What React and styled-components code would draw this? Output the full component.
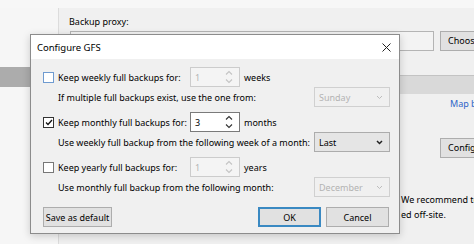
import { styled, createGlobalStyle } from "styled-components";

const GlobalStyle = createGlobalStyle`
  html, body {
    margin: 0;
    padding: 0;
    background: #f0f0f0;
  }
  body {
    font-family: "Noto Sans", "Open Sans", sans-serif;
    font-size: 9px;
    color: #000;
  }
`;

const Window = styled.div`
  position: relative;
  width: 474px;
  height: 244px;
  overflow: hidden;
  display: flex;
  flex-direction: column;
  background: #f0f0f0;
`;

const TopStrip = styled.div`
  height: 8px;
  background: #f7f7f7;
  flex-shrink: 0;
`;

const Main = styled.div`
  flex: 1;
  display: flex;
`;

const Sidebar = styled.div`
  width: 58px;
  flex-shrink: 0;
  background: #f6f6f6;
  border-right: 1px solid #dcdcdc;
  padding-top: 59px;
`;

const NavItem = styled.div`
  height: 20px;
  background: ${(p) => (p.$selected ? "#acacac" : "transparent")};
`;

const Content = styled.div`
  flex: 1;
  padding: 8px 0 0 11px;
  display: flex;
  flex-direction: column;
`;

const FieldLabel = styled.div`
  line-height: 12px;
  margin-left: -1px;
`;

const ProxyRow = styled.div`
  display: flex;
  gap: 6px;
  margin-top: 3px;
`;

const ProxyInput = styled.div`
  width: 362px;
  height: 18px;
  flex-shrink: 0;
  border: 1px solid #b4b4b4;
  background: #f3f3f3;
`;

const WinButton = styled.div`
  height: 18px;
  flex-shrink: 0;
  width: ${(p) => p.$width || 60}px;
  background: #e1e1e1;
  border: 1px solid #adadad;
  display: flex;
  align-items: center;
  justify-content: ${(p) => (p.$left ? "flex-start" : "center")};
  padding-left: ${(p) => (p.$left ? 7 : 0)}px;
  line-height: 12px;
  box-sizing: content-box;
`;

const HeaderBar = styled.div`
  margin-top: 24px;
  height: 18px;
  width: 420px;
  flex-shrink: 0;
  background: #d9d9d9;
  border-top: 1px solid #c3c3c3;
`;

const LinkText = styled.div`
  margin: 4px 0 0 380px;
  color: #2f66c8;
  white-space: nowrap;
  line-height: 12px;
`;

const ConfigureRow = styled.div`
  display: flex;
  margin: 28px 0 0 370px;
`;

const Note = styled.div`
  margin: 34px 0 0 331px;
  line-height: 15px;
  white-space: nowrap;
`;

/* dialog */

const Dialog = styled.div`
  position: absolute;
  left: 30px;
  top: 34px;
  width: 368px;
  height: 198px;
  border: 1px solid #8c8c8c;
  background: #f0f0f0;
  box-shadow: 0 2px 8px rgba(0, 0, 0, 0.18);
  display: flex;
  flex-direction: column;
`;

const TitleBar = styled.div`
  height: 24px;
  background: #fff;
  display: flex;
  align-items: center;
  justify-content: space-between;
  padding: 0 8px 0 6px;
  font-size: 9.5px;
`;

const CloseButton = styled.svg`
  width: 9px;
  height: 9px;
`;

const Body = styled.div`
  flex: 1;
  padding: 8px 9px 0 12px;
  display: flex;
  flex-direction: column;
`;

const Group = styled.div`
  margin-bottom: 5px;
`;

const MainRow = styled.div`
  height: 20px;
  display: flex;
  align-items: center;
`;

const SubRow = styled.div`
  height: 20px;
  display: flex;
  align-items: center;
  padding-left: 15px;
`;

const Check = styled.div`
  width: 9px;
  height: 9px;
  border: 1px solid ${(p) => p.$border};
  background: #fff;
  margin-right: 4px;
  display: flex;
  align-items: center;
  justify-content: center;
`;

const RowLabel = styled.div`
  width: ${(p) => (p.$width ? `${p.$width}px` : "auto")};
  flex: ${(p) => (p.$grow ? 1 : "none")};
  white-space: nowrap;
`;

const Spin = styled.div`
  width: 48px;
  height: 18px;
  margin: 0 4px 0 4px;
  border: 1px solid ${(p) => (p.$disabled ? "#cccccc" : "#7a7a7a")};
  background: ${(p) => (p.$disabled ? "#f4f4f4" : "#fff")};
  color: ${(p) => (p.$disabled ? "#b5b5b5" : "#000")};
  display: flex;
  align-items: center;
  justify-content: space-between;
  padding-left: 4px;
  box-sizing: border-box;
  width: 50px;
  height: 20px;
`;

const SpinArrows = styled.svg`
  width: 8px;
  height: 14px;
  margin-right: 6px;
`;

const Combo = styled.div`
  width: 76px;
  height: 20px;
  box-sizing: border-box;
  border: 1px solid ${(p) => (p.$disabled ? "#d0d0d0" : "#acacac")};
  background: ${(p) => (p.$disabled ? "#f0f0f0" : "#e5e5e5")};
  color: ${(p) => (p.$disabled ? "#b3b3b3" : "#000")};
  display: flex;
  align-items: center;
  justify-content: space-between;
  padding: 0 6px 0 4px;
`;

const ComboArrow = styled.svg`
  width: 7px;
  height: 5px;
`;

const ButtonRow = styled.div`
  margin-top: 5px;
  display: flex;
  align-items: center;
  padding-right: 1px;
`;

const DialogButton = styled.div`
  width: ${(p) => p.$width}px;
  height: 20px;
  box-sizing: border-box;
  margin-left: ${(p) => p.$gap || 0}px;
  background: #e1e1e1;
  border: ${(p) => (p.$default ? "2px solid #3a89c2" : "1px solid #adadad")};
  display: flex;
  align-items: center;
  justify-content: center;
`;

const Spacer = styled.div`
  flex: 1;
`;

const CheckBox = ({ checked, border }) => (
  <Check $border={border}>
    {checked && (
      <svg width="8" height="7" viewBox="0 0 8 7">
        <path d="M1 3.5 L3 5.5 L7 1" fill="none" stroke="#111" strokeWidth="1.3" />
      </svg>
    )}
  </Check>
);

const SpinBox = ({ value, disabled }) => (
  <Spin $disabled={disabled}>
    <span>{value}</span>
    <SpinArrows viewBox="0 0 8 14">
      <path
        d="M1 4.5 L4 1.5 L7 4.5 M1 9.5 L4 12.5 L7 9.5"
        fill="none"
        stroke={disabled ? "#c4c4c4" : "#333"}
        strokeWidth="1.1"
      />
    </SpinArrows>
  </Spin>
);

const ComboBox = ({ value, disabled }) => (
  <Combo $disabled={disabled}>
    <span>{value}</span>
    <ComboArrow viewBox="0 0 7 5">
      <path
        d="M1 1 L3.5 3.5 L6 1"
        fill="none"
        stroke={disabled ? "#bdbdbd" : "#222"}
        strokeWidth={disabled ? 1 : 1.5}
      />
    </ComboArrow>
  </Combo>
);

const App = () => {
  return (
    <Window>
      <GlobalStyle />
      <TopStrip />
      <Main>
        <Sidebar>
          <NavItem $selected />
        </Sidebar>
        <Content>
          <FieldLabel>Backup proxy:</FieldLabel>
          <ProxyRow>
            <ProxyInput />
            <WinButton $width={60} $left>Choose...</WinButton>
          </ProxyRow>
          <HeaderBar />
          <LinkText>Map backup</LinkText>
          <ConfigureRow>
            <WinButton $width={60} $left>Configure...</WinButton>
          </ConfigureRow>
          <Note>
            We recommend to keep
            <br />
            ed off-site.
          </Note>
        </Content>
      </Main>

      <Dialog>
        <TitleBar>
          <span>Configure GFS</span>
          <CloseButton viewBox="0 0 9 9">
            <path d="M0.5 0.5 L8.5 8.5 M8.5 0.5 L0.5 8.5" stroke="#222" strokeWidth="1" />
          </CloseButton>
        </TitleBar>
        <Body>
          <Group>
            <MainRow>
              <CheckBox border="#6f9bd0" />
              <RowLabel $width={128}>Keep weekly full backups for:</RowLabel>
              <SpinBox value="1" disabled />
              <span>weeks</span>
            </MainRow>
            <SubRow>
              <RowLabel $grow>If multiple full backups exist, use the one from:</RowLabel>
              <ComboBox value="Sunday" disabled />
            </SubRow>
          </Group>
          <Group>
            <MainRow>
              <CheckBox checked border="#333" />
              <RowLabel $width={128}>Keep monthly full backups for:</RowLabel>
              <SpinBox value="3" />
              <span>months</span>
            </MainRow>
            <SubRow>
              <RowLabel $grow>Use weekly full backup from the following week of a month:</RowLabel>
              <ComboBox value="Last" />
            </SubRow>
          </Group>
          <Group>
            <MainRow>
              <CheckBox border="#777" />
              <RowLabel $width={128}>Keep yearly full backups for:</RowLabel>
              <SpinBox value="1" disabled />
              <span>years</span>
            </MainRow>
            <SubRow>
              <RowLabel $grow>Use monthly full backup from the following month:</RowLabel>
              <ComboBox value="December" disabled />
            </SubRow>
          </Group>
          <ButtonRow>
            <DialogButton $width={69}>Save as default</DialogButton>
            <Spacer />
            <DialogButton $width={63} $default>OK</DialogButton>
            <DialogButton $width={63} $gap={5}>Cancel</DialogButton>
          </ButtonRow>
        </Body>
      </Dialog>
    </Window>
  );
};

export default App;
